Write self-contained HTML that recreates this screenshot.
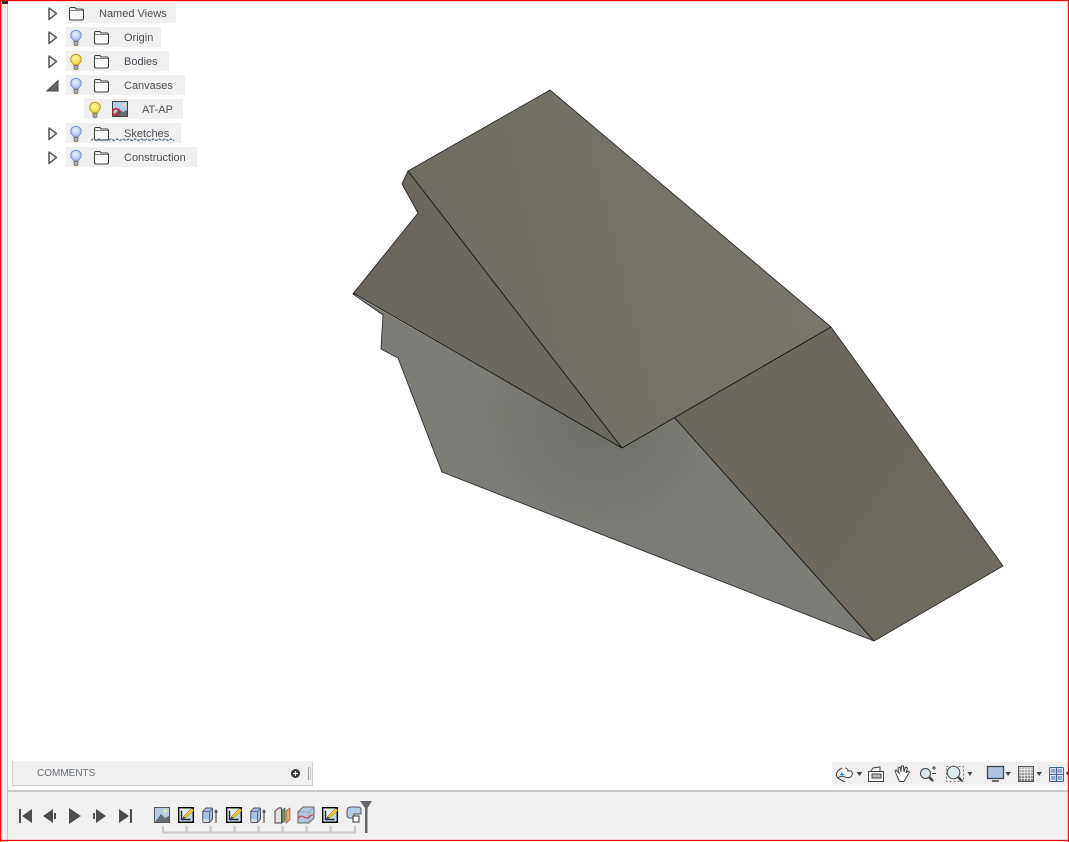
<!DOCTYPE html>
<html><head><meta charset="utf-8"><style>
html,body{margin:0;padding:0;background:#fff}
#p{position:relative;width:1069px;height:842px;overflow:hidden;background:#fff;font-family:"Liberation Sans",sans-serif}
.b{position:absolute}
.r{position:absolute;background:#f0f0f0;height:20px}
.t{position:absolute;font-size:11px;color:#4e4e55;line-height:12px;white-space:nowrap}
svg{position:absolute;left:0;top:0}
</style></head><body><div id="p">
<div class="b" style="left:1px;top:0;width:6px;height:842px;background:#f0f0f0"></div>
<div class="b" style="left:7px;top:0;width:1px;height:842px;background:#c8c8c8"></div>
<div class="b" style="left:2px;top:1px;width:6px;height:3px;background:#333"></div>
<div class="r" style="left:66px;top:3px;width:110px"></div>
<div class="r" style="left:66px;top:27px;width:95px"></div>
<div class="r" style="left:66px;top:51px;width:103px"></div>
<div class="r" style="left:66px;top:75px;width:119px"></div>
<div class="r" style="left:84px;top:99px;width:99px"></div>
<div class="r" style="left:66px;top:123px;width:115px"></div>
<div class="r" style="left:66px;top:147px;width:131px"></div>
<div class="t" style="left:99px;top:8px">Named Views</div>
<div class="t" style="left:124px;top:32px">Origin</div>
<div class="t" style="left:124px;top:56px">Bodies</div>
<div class="t" style="left:124px;top:80px">Canvases</div>
<div class="t" style="left:142px;top:104px">AT-AP</div>
<div class="t" style="left:124px;top:128px">Sketches</div>
<div class="t" style="left:124px;top:152px">Construction</div>

<div class="b" style="left:12px;top:761px;width:299px;height:24px;background:#f0f0f0;border:1px solid #d0d0d0;border-top:0"></div>
<div class="t" style="left:37px;top:768px;font-size:10px;color:#6a7078">COMMENTS</div>
<div class="b" style="left:832px;top:762px;width:237px;height:24px;background:#f0f0f0"></div>
<div class="b" style="left:8px;top:790px;width:1061px;height:50px;background:#f0f0f0"></div>
<div class="b" style="left:8px;top:790px;width:1061px;height:2px;background:#c8c8c8"></div>

<svg width="1069" height="842" viewBox="0 0 1069 842" fill="none">
<defs>
<linearGradient id="gt" x1="408" y1="300" x2="831" y2="200" gradientUnits="userSpaceOnUse"><stop offset="0" stop-color="#6f6c62"/><stop offset="1" stop-color="#7a776c"/></linearGradient>
<linearGradient id="gr" x1="700" y1="400" x2="1000" y2="600" gradientUnits="userSpaceOnUse"><stop offset="0" stop-color="#6b675d"/><stop offset="1" stop-color="#6f6b60"/></linearGradient>
<radialGradient id="gf" cx="600" cy="415" r="115" gradientUnits="userSpaceOnUse"><stop offset="0" stop-color="#6c6d67"/><stop offset="1" stop-color="#7b7d76"/></radialGradient>
<radialGradient id="bulb" cx=".45" cy=".4" r=".6"><stop offset="0" stop-color="#eef3ff"/><stop offset="1" stop-color="#9fb5e8"/></radialGradient>
<radialGradient id="bulby" cx=".45" cy=".4" r=".6"><stop offset="0" stop-color="#fff9b0"/><stop offset="1" stop-color="#efcf30"/></radialGradient>
<linearGradient id="sb" x1="0" y1="0" x2="1" y2="1"><stop offset="0" stop-color="#fff"/><stop offset="1" stop-color="#a9c6e6"/></linearGradient>
<linearGradient id="gridg" x1="0" y1="0" x2="0" y2="1"><stop offset="0" stop-color="#c8c8c8"/><stop offset="1" stop-color="#777"/></linearGradient>
<g id="arrow"><path d="M49 8L56.500 13.500L49 19.500Z" fill="#f6f6f6" stroke="#5e5e5e" stroke-width="1.600" stroke-linejoin="round"/></g>
<g id="fold"><path d="M.5 2C.5 1 1 .5 2 .5H6L7 2H13C14 2 14.500 2.500 14.500 3.500V11.500C14.500 12.500 14 13 13 13H2C1 13 .5 12.500 .5 11.500Z" fill="#f8f8f8" stroke="#3e3e3e"/><path d="M1 3.500H14" stroke="#555" stroke-width=".7"/></g>
<g id="bb"><path d="M-2.500 4.800C-2.500 3.500-5.300 2.500-5.300-.5A5.300 5.300 0 0 1 5.300-.5C5.300 2.500 2.500 3.500 2.500 4.800Z" fill="url(#bulb)" stroke="#8097cf"/><path d="M-2 5.500H2V8.500L1 9.500H-1L-2 8.500Z" fill="#a9a9a9" stroke="#666" stroke-width=".7"/></g>
<g id="by"><path d="M-2.500 4.800C-2.500 3.500-5.300 2.500-5.300-.5A5.300 5.300 0 0 1 5.300-.5C5.300 2.500 2.500 3.500 2.500 4.800Z" fill="url(#bulby)" stroke="#bb9e22"/><path d="M-2 5.500H2V8.500L1 9.500H-1L-2 8.500Z" fill="#a9a9a9" stroke="#666" stroke-width=".7"/></g>
<g id="sk"><rect x=".7" y=".7" width="14.600" height="14.600" fill="url(#sb)" stroke="#000" stroke-width="1.400"/><path d="M3.500 3.500V12.500H12.500" stroke="#222" stroke-width="1.400"/><path d="M5.500 9.500L13.500 1.500L16 3.500L7.500 11Z" fill="#f6c51f" stroke="#8a6d10" stroke-width=".5"/><path d="M5.500 9.500L4.500 12L7.500 11Z" fill="#333"/></g>
<g id="ex"><path d="M.8 4.200L4 1H10L10.500 1.500V12L7.500 15.500H2Q.8 15.500 .8 14Z" fill="#a6bfe2" stroke="#4c5568" stroke-width="1"/><path d="M1.200 12H7.500V15H1.200Z" fill="#d8d8d8"/><path d="M7.500 4.500V15.500M1 4.500H7.500L10.500 1.500" stroke="#4c5568" stroke-width=".8"/><path d="M14 16V4" stroke="#555" stroke-width="1.200"/><path d="M12 5.500L14 2L16 5.500Z" fill="#444"/></g>
</defs>

<!-- model -->
<path d="M353 294L383 315L381 349L398 358L442 472L874 641L674 417L622 448Z" fill="url(#gf)"/>
<path d="M408 171L402 184L418 213L353 293L622 448Z" fill="#6b675e"/>
<path d="M550 90L831 327L622 448L408 171Z" fill="url(#gt)"/>
<path d="M831 327L1003 566L874 641L674 417Z" fill="url(#gr)"/>
<g stroke-width=".9" stroke-linejoin="round">
<path d="M408 171L550 90L831 327L1003 566L874 641L442 472L398 358L381 349L383 315L353 294L418 213L402 184Z" stroke="#2c2c2c"/>
<path d="M408 171L622 448L831 327M353 293L622 448M674 417L874 641" stroke="#111"/>
</g>

<!-- tree -->
<use href="#arrow"/><use href="#arrow" y="24"/><use href="#arrow" y="48"/><use href="#arrow" y="120"/><use href="#arrow" y="144"/>
<path d="M47 91L58 80.500V91Z" fill="#666" stroke="#444"/>
<use href="#fold" x="69" y="7"/><use href="#fold" x="94" y="31"/><use href="#fold" x="94" y="55"/><use href="#fold" x="94" y="79"/><use href="#fold" x="94" y="127"/><use href="#fold" x="94" y="151"/>
<use href="#bb" x="76" y="36"/><use href="#by" x="76" y="60"/><use href="#bb" x="76" y="84"/><use href="#by" x="95" y="108"/><use href="#bb" x="76" y="132"/><use href="#bb" x="76" y="156"/>
<rect x="112.500" y="101.500" width="15" height="15" fill="#b6cde6" stroke="#444"/>
<path d="M113 116L119 109L123 112L127 110V116Z" fill="#666b74"/><circle cx="124" cy="105" r="1.500" fill="#f6e79a"/><circle cx="116" cy="112" r="3.300" fill="none" stroke="#c22" stroke-width="1.500"/>
<path d="M91 140.500l2-1.500l3 1.500l3-1.500l3 1.500l3-1.500l3 1.500l3-1.500l3 1.500l3-1.500l3 1.500l3-1.500l3 1.500l3-1.500l3 1.500l3-1.500l3 1.500l3-1.500l3 1.500l3-1.500l3 1.500l3-1.500l3 1.500l3-1.500l3 1.500l3-1.500l3 1.500l3-1.500l3 1.500" stroke="#5d6f8e" stroke-width="1.300" stroke-dasharray="3 1"/>

<!-- comments plus -->
<circle cx="295.500" cy="773.500" r="4.500" fill="#333"/><path d="M293 773.500H298M295.500 771V776" stroke="#fff" stroke-width="1.200"/>
<path d="M308.500 767V780" stroke="#999"/><path d="M310.500 767V780" stroke="#ccc"/>

<!-- timeline controls -->
<g fill="#4d4d4d">
<path d="M19 809H21V823H19ZM32 809V823L22 816Z"/>
<path d="M43 816L53 809V823ZM54 813H56V819H54Z"/>
<path d="M69 808L81 816L69 824Z"/>
<path d="M93 813H95V819H93ZM96 809L106 816L96 823Z"/>
<path d="M119 809L129 816L119 823ZM130 809H132V823H130Z"/>
</g>
<path d="M163 826V832.500H355V826M186.500 826V832M210.500 826V832M234.500 826V832M258.500 826V832M282.500 826V832M306.500 826V832M330.500 826V832" stroke="#c8c8c8" stroke-width="2"/>
<rect x="154.500" y="807.500" width="15" height="15" fill="#b6cde6" stroke="#555"/>
<path d="M155 822L161 814L165 818L169 816V822Z" fill="#666b74"/><circle cx="165" cy="811" r="1.600" fill="#f6e79a"/>
<use href="#sk" x="178" y="807"/><use href="#ex" x="202" y="807"/><use href="#sk" x="226" y="807"/><use href="#ex" x="250" y="807"/>
<path d="M275 811.500L278.500 808H281.500V823H275Z" fill="#e3e3dd" stroke="#444"/><path d="M282 810L285 808V821L282 823Z" fill="#6f9d5b" stroke="#444" stroke-width=".6"/><path d="M286 811L290 808V820L286 823Z" fill="#e0a67a" stroke="#844" stroke-width=".6"/>
<path d="M298 812L303 807H314V818L309 823H298Z" fill="#b2c6e0" stroke="#666"/><path d="M298.500 812H309L314 807M309 812V823" stroke="#8899aa" stroke-width=".7"/><path d="M298.500 818C301 814 303 817 306 818C309 819 309 815 313 815" stroke="#c33" stroke-width="1"/>
<use href="#sk" x="322" y="807"/>
<path d="M347 811Q347 807 351 807H358Q361 807 361 810V814H354V818H350Q347 818 347 815Z" fill="#b4cdea" stroke="#556"/><path d="M353 816H359V822H353Z" fill="#fff" stroke="#333"/>
<path d="M360 801H372L367.500 808V833H365V808Z" fill="#666"/>

<!-- nav bar -->
<g stroke="#444" fill="none">
<path d="M842 768C838 770 834 774 838 778C840 780 843 781 845 782"/>
<path d="M845 768C847 768 848 770 848 771C851 770 853 772 852 775C851 778 848 778 845 777C843 776 840 776 838 778" fill="#fff"/>
<path d="M840 774.500h4M842 772.500v4" stroke="#1188dd" stroke-width="1.200"/>
<path d="M868.500 771.500H883.500V781.500H868.500Z M871 771L873 768L880 767V771" fill="#f4f4f4"/>
<rect x="872" y="774" width="9" height="4" fill="#bbb" stroke="#444"/>
<path d="M897 776L895 771L896 770L899 773L898 768L900 767L901 772L901.500 766H903.500L904 772L905.500 767L907.500 768L906 773L908 771L909.500 772L906 778L904 781.500H899.500Z" fill="#fff"/>
<circle cx="925.500" cy="773.500" r="5" fill="#d5e8ea"/><path d="M929 777L933 781" stroke-width="2.400"/><path d="M932 768H936M934 766V770M932 773.500H936"/>
<circle cx="953.500" cy="772.500" r="6.300" fill="#dcecee"/><path d="M958 777L962 781" stroke-width="2.400"/>
<rect x="946.500" y="766.500" width="17" height="15" stroke="#777" stroke-dasharray="2 2"/>
<rect x="987.500" y="766.500" width="16" height="12" fill="#a9c3e5" stroke-width="1.300"/><path d="M992 781H999" stroke-width="1.500"/>
</g>
<rect x="1018.500" y="766.500" width="15" height="15" fill="url(#gridg)" stroke="#555"/>
<path d="M1021.500 767V781M1024.500 767V781M1027.500 767V781M1030.500 767V781M1019 769.500H1033M1019 772.500H1033M1019 775.500H1033M1019 778.500H1033" stroke="#eee" stroke-width=".7"/>
<rect x="1049.500" y="767.500" width="14" height="14" rx="1" fill="#dbe5f3" stroke="#3c5f95"/>
<path d="M1051 769H1055.500V773H1051ZM1057.500 769H1062V773H1057.500ZM1051 776H1055.500V780H1051ZM1057.500 776H1062V780H1057.500Z" fill="#8fa9d3"/>
<path d="M1056.500 768V781M1050 774.500H1063" stroke="#3c5f95"/>
<g fill="#444"><path d="M856.500 772H862.500L859.500 776ZM967.500 772H972.500L970 776ZM1005.500 772H1011L1008 776ZM1036.500 772H1042L1039 776ZM1066 772H1069V775H1067Z"/></g>

<!-- border -->
<path d="M0 .5H1069M.7 0V842M1068.500 0V842M0 840.500H1069" stroke="#f00" stroke-width="1.300"/>
</svg>
</div></body></html>
